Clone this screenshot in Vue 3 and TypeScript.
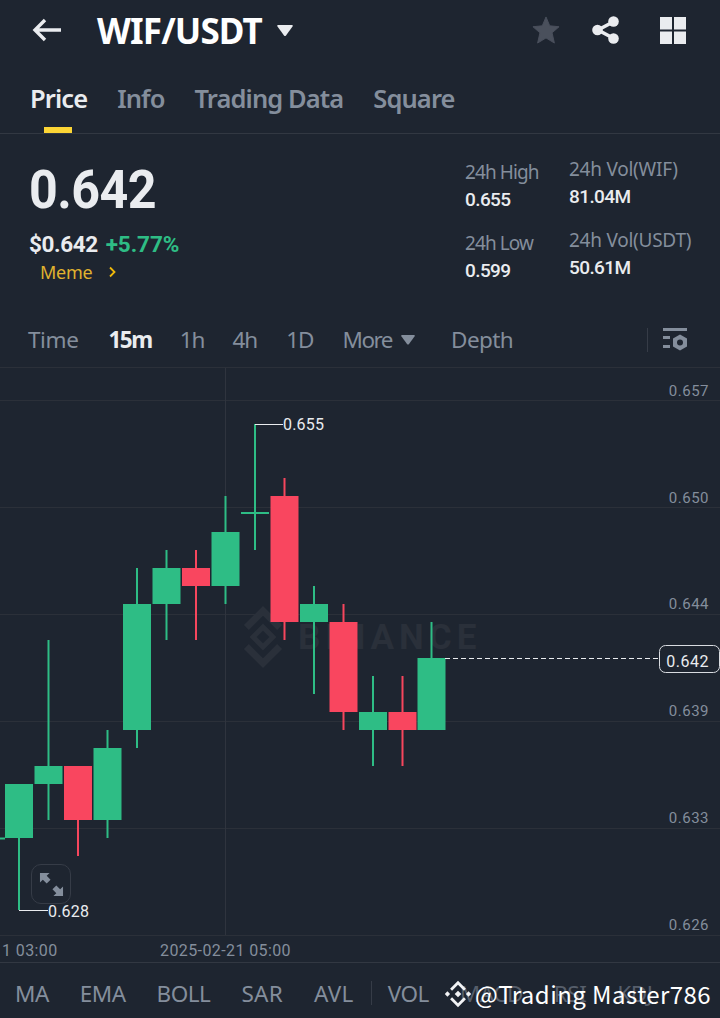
<script setup lang="ts">
interface Candle { x: number; hi: number; lo: number; top: number; bot: number; up: boolean }
const candles: Candle[] = [
  { x: 19, hi: 784, lo: 910, top: 784, bot: 838, up: true },
  { x: 48.5, hi: 640, lo: 820, top: 766, bot: 784, up: true },
  { x: 78, hi: 766, lo: 856, top: 766, bot: 820, up: false },
  { x: 107.5, hi: 730, lo: 838, top: 748, bot: 820, up: true },
  { x: 137, hi: 568, lo: 748, top: 604, bot: 730, up: true },
  { x: 166.5, hi: 550, lo: 640, top: 568, bot: 604, up: true },
  { x: 196, hi: 550, lo: 640, top: 568, bot: 586, up: false },
  { x: 225.5, hi: 496, lo: 604, top: 532, bot: 586, up: true },
  { x: 255, hi: 424, lo: 550, top: 512, bot: 514, up: true },
  { x: 284.5, hi: 478, lo: 640, top: 496, bot: 622, up: false },
  { x: 314, hi: 586, lo: 694, top: 604, bot: 622, up: true },
  { x: 343.5, hi: 604, lo: 730, top: 622, bot: 712, up: false },
  { x: 373, hi: 676, lo: 766, top: 712, bot: 730, up: true },
  { x: 402.5, hi: 676, lo: 766, top: 712, bot: 730, up: false },
  { x: 431.5, hi: 622, lo: 730, top: 658, bot: 730, up: true },
]
const grid = [400, 507, 614, 721, 828, 935]
const prices = [
  { y: 396, t: '0.657' }, { y: 503, t: '0.650' }, { y: 609, t: '0.644' },
  { y: 716, t: '0.639' }, { y: 823, t: '0.633' }, { y: 930, t: '0.626' },
]
const tabs = ['Price', 'Info', 'Trading Data', 'Square']
const indicators = ['MA', 'EMA', 'BOLL', 'SAR', 'AVL']
const indicators2 = ['VOL', 'MACD', 'RSI', 'KDJ']
</script>

<template>
  <div class="page">
    <header class="top">
      <svg class="back" width="30" height="24" viewBox="0 0 30 24"><path d="M13 2 L3 12 L13 22 M3 12 H29" fill="none" stroke="#eaecef" stroke-width="3.4"/></svg>
      <span class="pair">WIF/USDT</span>
      <svg class="caret" width="18" height="13" viewBox="0 0 18 13"><path d="M2 1 H16 Q17.500 1 16.500 2.500 L10 11.500 Q9 12.500 8 11.500 L1.500 2.500 Q0.500 1 2 1 Z" fill="#eaecef"/></svg>
      <span class="spacer"></span>
      <svg width="28" height="28" viewBox="0 0 30 30"><path d="M15 1 L19 10.5 L29 11.5 L21.5 18 L24 29 L15 23.5 L6 29 L8.500 18 L1 11.500 L11 10.500 Z" fill="#4a505c" stroke="#4a505c" stroke-linejoin="round"/></svg>
      <svg class="share" width="30" height="30" viewBox="0 0 30 30"><path d="M22 7 L7 15 L22 23" fill="none" stroke="#eaecef" stroke-width="3.600"/><circle cx="22.500" cy="6.500" r="5.300" fill="#eaecef"/><circle cx="6.500" cy="15" r="5.300" fill="#eaecef"/><circle cx="22.500" cy="23.500" r="5.300" fill="#eaecef"/></svg>
      <svg class="grid-ic" width="26" height="27" viewBox="0 0 26 27" fill="#eaecef"><rect width="12" height="12.500"/><rect x="14" width="12" height="12.500"/><rect y="14.500" width="12" height="12.500"/><rect x="14" y="14.500" width="12" height="12.500"/></svg>
    </header>

    <nav class="tabs">
      <span v-for="(t, i) in tabs" :key="t" class="tab" :class="{ on: i === 0 }">{{ t }}</span>
    </nav>

    <section class="summary">
      <div class="left">
        <div class="big">0.642</div>
        <div class="sub"><span class="usd">$0.642</span><span class="pct">+5.77%</span></div>
        <div class="meme"><span>Meme</span><svg width="9" height="12" viewBox="0 0 9 12"><path d="M2 1.500 L6.500 6 L2 10.500" fill="none" stroke="#f0b90b" stroke-width="1.800"/></svg></div>
      </div>
      <div class="stats">
        <div class="col col1">
          <div class="lab">24h High</div><div class="val">0.655</div>
          <div class="lab gap">24h Low</div><div class="val">0.599</div>
        </div>
        <div class="col col2">
          <div class="lab">24h Vol(WIF)</div><div class="val">81.04M</div>
          <div class="lab gap">24h Vol(USDT)</div><div class="val">50.61M</div>
        </div>
      </div>
    </section>

    <div class="times">
      <span class="t">Time</span>
      <span class="t t-15 active">15m</span>
      <span class="t t-1h">1h</span>
      <span class="t t-4h">4h</span>
      <span class="t t-1d">1D</span>
      <span class="t t-more">More</span>
      <svg class="more-caret" width="14" height="10" viewBox="0 0 14 10"><path d="M1 0 H13 Q14.300 0 13.500 1.500 L8 9 Q7 10 6 9 L0.500 1.500 Q-0.300 0 1 0 Z" fill="#848e9c"/></svg>
      <span class="t t-depth">Depth</span>
      <span class="spacer"></span>
      <span class="vsep"></span>
      <svg width="25" height="24" viewBox="0 0 25 24" fill="#848e9c"><rect x="0" y="0" width="24" height="3"/><rect x="0" y="8" width="7" height="3"/><rect x="0" y="17" width="7" height="3"/><path fill-rule="evenodd" d="M17 6.500 L24 10.500 V18.500 L17 22.500 L10 18.500 V10.500 Z M17 11.500 A3 3 0 1 0 17 17.500 A3 3 0 1 0 17 11.500 Z"/></svg>
    </div>

    <div class="chart">
      <svg class="plot" width="720" height="595" viewBox="0 368 720 595">
        <line v-for="y in grid" :key="y" x1="0" x2="720" :y1="y + 0.5" :y2="y + 0.5" stroke="#2b3039"/>
        <line x1="225.500" x2="225.500" y1="368" y2="935" stroke="#2f343e"/>

        <g fill="#2a303a" transform="translate(263 637) rotate(45)">
          <rect x="-7" y="-7" width="14" height="14" fill="none" stroke="#2a303a" stroke-width="5"/>
          <path d="M-22 -22 H5 V-15 H-15 V5 H-22 Z"/>
          <path d="M22 22 H-5 V15 H15 V-5 H22 Z"/>
        </g>
        <text x="298" y="649" class="wm">BINANCE</text>

        <line x1="0" x2="5" y1="838.500" y2="838.500" stroke="#2ebd85" stroke-width="2"/>
        <g v-for="c in candles" :key="c.x">
          <line :x1="c.x" :x2="c.x" :y1="c.hi" :y2="c.lo" :stroke="c.up ? '#2ebd85' : '#f6465d'" stroke-width="2"/>
          <rect :x="c.x - 14" :y="c.top" width="28" :height="c.bot - c.top" :fill="c.up ? '#2ebd85' : '#f9465f'"/>
        </g>

        <path d="M255 424.500 H283" fill="none" stroke="#eaecef"/>
        <text x="283" y="430" class="mark">0.655</text>
        <path d="M19 910.500 H48" fill="none" stroke="#eaecef"/>
        <text x="48" y="917" class="mark">0.628</text>

        <line x1="445" x2="659" y1="658.500" y2="658.500" stroke="#eaecef" stroke-dasharray="5 3"/>
        <text v-for="p in prices" :key="p.t" x="709" :y="p.y" class="price">{{ p.t }}</text>
        <rect x="659.500" y="645.500" width="60" height="27" rx="6" fill="#1e2530" stroke="#d9dce1"/>
        <text x="709" y="667" class="price now">0.642</text>

        <text x="2" y="956" class="date">1 03:00</text>
        <text x="160" y="956" class="date">2025-02-21 05:00</text>
        <line x1="0" x2="720" y1="962.500" y2="962.500" stroke="#323842"/>
      </svg>
      <div class="expand">
        <svg width="25" height="25" viewBox="0 0 26 26" fill="#848e9c"><path d="M1 1 H11 L8 4 L12 8 L8 12 L4 8 L1 11 Z"/><path d="M25 25 H15 L18 22 L14 18 L18 14 L22 18 L25 15 Z"/></svg>
      </div>
    </div>

    <div class="inds">
      <span v-for="i in indicators" :key="i" class="ind">{{ i }}</span>
      <span class="isep"></span>
      <span v-for="(i, n) in indicators2" :key="i" class="ind" :class="{ dim: n > 0 }">{{ i }}</span>
    </div>

    <div class="credit">
      <svg width="28" height="28" viewBox="-15 -15 30 30" fill="none">
        <g transform="rotate(45)" fill="#f2f3f5">
          <rect x="-2.500" y="-2.500" width="5" height="5"/>
          <path d="M-10 -10 H2 V-7 H-7 V2 H-10 Z"/>
          <path d="M10 10 H-2 V7 H7 V-2 H10 Z"/>
          <rect x="6" y="-10" width="4" height="4"/>
          <rect x="-10" y="6" width="4" height="4"/>
        </g>
      </svg>
      <span class="credit-text">@Trading Master786</span>
    </div>
  </div>
</template>

<style scoped>
.page { position: relative; width: 720px; height: 1018px; overflow: hidden; background: #1e2530; color: #eaecef; font-family: "Noto Sans", "Open Sans", sans-serif; }
.top { display: flex; align-items: center; height: 60px; padding: 0 34px 0 32px; box-sizing: border-box; }
.back { margin-right: 35px; }
.pair { font-size: 35px; font-weight: 700; letter-spacing: -0.85px; color: #fff; }
.caret { margin-left: 14px; }
.spacer { flex: 1; }
.share { margin-left: 31px; }
.grid-ic { margin-left: 39px; }
.tabs { display: flex; gap: 30px; height: 74px; padding: 18px 0 0 30px; box-sizing: border-box; border-bottom: 1px solid #323842; }
.tab { position: relative; height: 40px; font-size: 25.5px; font-weight: 600; color: #848e9c; line-height: 40px; letter-spacing: -0.9px; }
.tab.on { color: #eaecef; }
.tab.on::after { content: ""; position: absolute; left: 14px; width: 28px; height: 6px; bottom: -15px; background: #fcd535; }
.summary { display: flex; height: 184px; padding: 0 0 0 29px; box-sizing: border-box; }
.left { width: 436px; }
.big { margin-top: 24px; font-family: Roboto, sans-serif; font-size: 54px; line-height: 64px; font-weight: 700; letter-spacing: -0.6px; transform: scaleX(0.93); transform-origin: left center; }
.sub { display: flex; gap: 8px; margin-top: 8px; font-family: Roboto, sans-serif; font-size: 22.5px; line-height: 28px; font-weight: 500; }
.usd { color: #eaecef; font-weight: 700; letter-spacing: -0.4px; }
.pct { color: #2ebd85; font-weight: 700; letter-spacing: -0.1px; }
.meme { display: flex; align-items: center; gap: 16px; margin: 2px 0 0 11px; font-size: 18px; line-height: 24px; letter-spacing: -0.3px; color: #e0b22e; }
.stats { display: flex; }
.col1 { width: 104px; padding-top: 25px; }
.col2 { padding-top: 22px; }
.lab { font-size: 19px; line-height: 26px; color: #848e9c; }
.col1 .lab { letter-spacing: -0.9px; }
.col2 .lab { letter-spacing: -0.25px; }
.lab.gap { margin-top: 18px; }
.val { margin-top: 3px; font-family: Roboto, sans-serif; font-size: 19px; line-height: 24px; font-weight: 500; letter-spacing: -0.6px; color: #eaecef; }
.times { display: flex; align-items: center; height: 50px; padding: 0 32px 6px 28px; box-sizing: border-box; border-bottom: 1px solid #2b3039; }
.t { font-size: 22.5px; line-height: 30px; color: #848e9c; letter-spacing: -0.4px; }
.t.active { font-weight: 700; color: #eaecef; letter-spacing: -1.5px; }
.t-15 { margin-left: 30px; }
.t-1h { margin-left: 28px; letter-spacing: -1px; }
.t-4h { margin-left: 28px; letter-spacing: -1px; }
.t-1d { margin-left: 29px; letter-spacing: -1px; }
.t-more { margin-left: 29px; letter-spacing: -1.5px; }
.more-caret { margin-left: 9px; }
.t-depth { margin-left: 36px; letter-spacing: -0.6px; }
.vsep { width: 1px; height: 24px; margin-right: 15px; background: #363c47; }
.chart { position: relative; height: 595px; }
.plot { display: block; font-family: Roboto, sans-serif; }
.price { fill: #848e9c; font-size: 15px; text-anchor: end; letter-spacing: 0.5px; }
.price.now { fill: #eaecef; font-size: 16px; }
.mark { fill: #eaecef; font-size: 16px; letter-spacing: 0.2px; }
.date { fill: #848e9c; font-size: 16px; letter-spacing: 0.4px; }
.wm { fill: #2a303a; font-size: 35px; font-weight: 700; letter-spacing: 5px; }
.expand { position: absolute; left: 31px; top: 496px; display: flex; align-items: center; justify-content: center; width: 40px; height: 40px; box-sizing: border-box; border: 1px solid #363c47; border-radius: 10px; background: #1e2530; }
.inds { display: flex; align-items: center; height: 55px; padding: 5px 0 0 15px; box-sizing: border-box; font-size: 22.5px; color: #848e9c; }
.ind { margin-right: 31px; letter-spacing: -0.5px; }
.ind:nth-child(4), .ind:nth-child(5) { letter-spacing: 0.3px; }
.ind.dim { opacity: 0.55; }
.isep { width: 1px; height: 24px; margin: 0 16px 0 -14px; background: #363c47; }
.credit { position: absolute; left: 444px; top: 977px; display: flex; align-items: center; gap: 3px; line-height: 34px; color: #fff; white-space: nowrap; }
.credit-text { font-family: "Noto Sans CJK SC", "Noto Sans", sans-serif; font-size: 24px; letter-spacing: 0.45px; }
</style>
